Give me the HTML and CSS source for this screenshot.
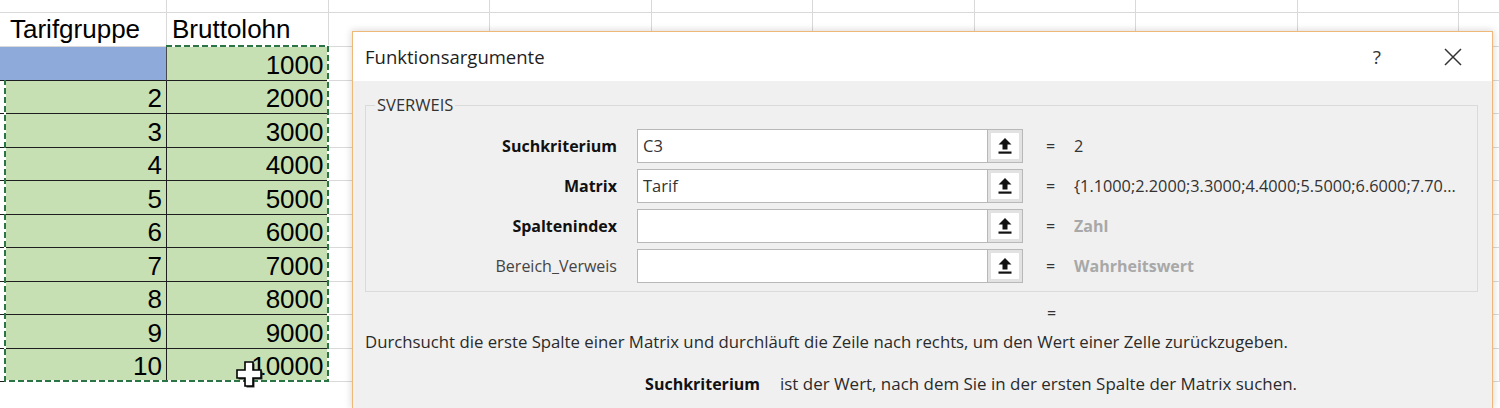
FILE: index.html
```html
<!DOCTYPE html>
<html lang="de">
<head>
<meta charset="utf-8">
<title>Funktionsargumente</title>
<link rel="stylesheet" href="styles.css">
</head>
<body>
<div class="sheet">
  <div class="c"></div><div class="c"></div><div class="c"></div><div class="c"></div><div class="c"></div><div class="c"></div><div class="c"></div><div class="c"></div><div class="c"></div><div class="c"></div>

  <div class="c h">Tarifgruppe</div><div class="c h hb">Bruttolohn</div><div class="c"></div><div class="c"></div><div class="c"></div><div class="c"></div><div class="c"></div><div class="c"></div><div class="c"></div><div class="c"></div>

  <div class="c blue"></div><div class="c g n">1000</div><div class="c"></div><div class="c"></div><div class="c"></div><div class="c"></div><div class="c"></div><div class="c"></div><div class="c"></div><div class="c"></div>
  <div class="c g a n">2</div><div class="c g n">2000</div><div class="c"></div><div class="c"></div><div class="c"></div><div class="c"></div><div class="c"></div><div class="c"></div><div class="c"></div><div class="c"></div>
  <div class="c g a n">3</div><div class="c g n">3000</div><div class="c"></div><div class="c"></div><div class="c"></div><div class="c"></div><div class="c"></div><div class="c"></div><div class="c"></div><div class="c"></div>
  <div class="c g a n">4</div><div class="c g n">4000</div><div class="c"></div><div class="c"></div><div class="c"></div><div class="c"></div><div class="c"></div><div class="c"></div><div class="c"></div><div class="c"></div>
  <div class="c g a n">5</div><div class="c g n">5000</div><div class="c"></div><div class="c"></div><div class="c"></div><div class="c"></div><div class="c"></div><div class="c"></div><div class="c"></div><div class="c"></div>
  <div class="c g a n">6</div><div class="c g n">6000</div><div class="c"></div><div class="c"></div><div class="c"></div><div class="c"></div><div class="c"></div><div class="c"></div><div class="c"></div><div class="c"></div>
  <div class="c g a n">7</div><div class="c g n">7000</div><div class="c"></div><div class="c"></div><div class="c"></div><div class="c"></div><div class="c"></div><div class="c"></div><div class="c"></div><div class="c"></div>
  <div class="c g a n">8</div><div class="c g n">8000</div><div class="c"></div><div class="c"></div><div class="c"></div><div class="c"></div><div class="c"></div><div class="c"></div><div class="c"></div><div class="c"></div>
  <div class="c g a n">9</div><div class="c g n">9000</div><div class="c"></div><div class="c"></div><div class="c"></div><div class="c"></div><div class="c"></div><div class="c"></div><div class="c"></div><div class="c"></div>
  <div class="c g a n">10</div><div class="c g n">10000</div><div class="c"></div><div class="c"></div><div class="c"></div><div class="c"></div><div class="c"></div><div class="c"></div><div class="c"></div><div class="c"></div>
</div>

<svg class="ants" width="1500" height="408" viewBox="0 0 1500 408">
  <path d="M166 46 H328 V381 H5 V80" fill="none" stroke="#ffffff" stroke-width="2"/>
  <path d="M166 46 H328 V381 H5 V80" fill="none" stroke="#2a7446" stroke-width="2" stroke-dasharray="6 3"/>
</svg>

<svg class="cursor" width="28" height="28" viewBox="0 0 28 28">
  <path d="M10 2 H18 V10 H26 V18 H18 V26 H10 V18 H2 V10 H10 Z" fill="#3a3a3a" transform="translate(1.5 1.5)"/>
  <path d="M10 2 H18 V10 H26 V18 H18 V26 H10 V18 H2 V10 H10 Z" fill="#ffffff" stroke="#000" stroke-width="1.6"/>
</svg>

<div class="dlg">
  <div class="title">
    <span class="t">Funktionsargumente</span>
    <span class="q">?</span>
    <svg class="x" width="18" height="18" viewBox="0 0 18 18">
      <path d="M1 1 L17 17 M17 1 L1 17" stroke="#333" stroke-width="1.5" fill="none"/>
    </svg>
  </div>
  <div class="body">
    <fieldset>
      <legend>SVERWEIS</legend>
      <div class="args">
        <div class="lbl b">Suchkriterium</div>
        <div class="inp"><span>C3</span><div class="btn"><svg width="16" height="18" viewBox="0 0 16 18"><path d="M8 1 L14.5 7.5 H10.5 V12.5 H5.5 V7.5 H1.5 Z" fill="#111"/><rect x="1.5" y="14.5" width="13" height="2.2" fill="#111"/></svg></div></div>
        <div class="eq">=</div>
        <div class="val">2</div>

        <div class="lbl b">Matrix</div>
        <div class="inp"><span>Tarif</span><div class="btn"><svg width="16" height="18" viewBox="0 0 16 18"><path d="M8 1 L14.5 7.5 H10.5 V12.5 H5.5 V7.5 H1.5 Z" fill="#111"/><rect x="1.5" y="14.5" width="13" height="2.2" fill="#111"/></svg></div></div>
        <div class="eq">=</div>
        <div class="val">{1.1000;2.2000;3.3000;4.4000;5.5000;6.6000;7.70...</div>

        <div class="lbl b">Spaltenindex</div>
        <div class="inp"><span></span><div class="btn"><svg width="16" height="18" viewBox="0 0 16 18"><path d="M8 1 L14.5 7.5 H10.5 V12.5 H5.5 V7.5 H1.5 Z" fill="#111"/><rect x="1.5" y="14.5" width="13" height="2.2" fill="#111"/></svg></div></div>
        <div class="eq">=</div>
        <div class="val muted">Zahl</div>

        <div class="lbl">Bereich_Verweis</div>
        <div class="inp"><span></span><div class="btn"><svg width="16" height="18" viewBox="0 0 16 18"><path d="M8 1 L14.5 7.5 H10.5 V12.5 H5.5 V7.5 H1.5 Z" fill="#111"/><rect x="1.5" y="14.5" width="13" height="2.2" fill="#111"/></svg></div></div>
        <div class="eq">=</div>
        <div class="val muted">Wahrheitswert</div>
      </div>
    </fieldset>
    <div class="result">=</div>
    <div class="desc">Durchsucht die erste Spalte einer Matrix und durchläuft die Zeile nach rechts, um den Wert einer Zelle zurückzugeben.</div>
    <div class="arghelp"><span class="an">Suchkriterium</span><span class="ad">ist der Wert, nach dem Sie in der ersten Spalte der Matrix suchen.</span></div>
  </div>
</div>
</body>
</html>
```

FILE: styles.css
```css
* { box-sizing: border-box; }
html, body { margin: 0; padding: 0; }
body {
  width: 1500px;
  height: 408px;
  overflow: hidden;
  background: #ffffff;
  position: relative;
  font-family: "Liberation Sans", Arial, sans-serif;
}

/* spreadsheet */
.sheet {
  display: grid;
  width: 1500px;
  height: 408px;
  overflow: hidden;
  grid-template-columns: 167px repeat(8, 161.5px) 41px;
  grid-template-rows: 13px 34px repeat(10, 33.5px) 26px;
}
.c {
  border-right: 1px solid #d9d9d9;
  border-bottom: 1px solid #d9d9d9;
  font-size: 26px;
  line-height: 26px;
  display: flex;
  align-items: flex-end;
  padding-bottom: 2px;
  color: #000;
  white-space: nowrap;
  overflow: hidden;
}
.h { padding-left: 10px; padding-bottom: 4px; }
.h.hb { padding-left: 5px; }
.n { justify-content: flex-end; padding-right: 4px; }
.g { background: #c6e0b4; border-bottom-color: #1e1e1e; }
.g.a {
  border-right-color: #1e1e1e;
  background: linear-gradient(90deg, #ffffff 5px, #c6e0b4 5px);
}
.blue { background: #8eaadb; border-bottom-color: #1e1e1e; border-right-color: #4a4a4a; }

.ants {
  position: absolute;
  left: 0;
  top: 0;
  pointer-events: none;
  z-index: 1;
}
.cursor {
  position: absolute;
  left: 235px;
  top: 360px;
  z-index: 2;
}

/* dialog */
.dlg {
  position: absolute;
  left: 352px;
  top: 31px;
  width: 1141px;
  height: 377px;
  border: 1px solid #f0b878;
  border-bottom: none;
  background: #f0f0f0;
  box-shadow: 0 0 7px 1px rgba(0, 0, 0, 0.14);
  font-family: "Open Sans", "Noto Sans", sans-serif;
  color: #222;
  z-index: 3;
}
.title {
  height: 49px;
  background: #ffffff;
  display: flex;
  align-items: center;
  padding-left: 12px;
  padding-right: 30px;
  font-size: 18.5px;
  color: #1e1e1e;
}
.title .t { flex: 1; }
.title .q { font-size: 19px; color: #333; margin-right: 63px; }
.title .x { display: block; }

.body {
  padding: 13px 14px 0 12px;
  font-size: 16px;
  line-height: 22px;
}
fieldset {
  margin: 0;
  border: 1px solid #dadada;
  padding: 13px 14px 8px 0;
}
legend {
  padding: 0 2px;
  margin-left: 9px;
  line-height: 22px;
  color: #333;
  font-size: 16.5px;
}
.args {
  display: grid;
  grid-template-columns: 271px 386px 51px 1fr;
  row-gap: 6px;
  align-items: center;
}
.lbl {
  text-align: right;
  padding-right: 20px;
  color: #444;
}
.lbl.b { font-weight: 700; color: #111; }
.inp {
  height: 34px;
  border: 1px solid #b8b8b8;
  background: #ffffff;
  display: flex;
}
.inp span {
  flex: 1;
  padding-left: 5px;
  line-height: 32px;
  color: #333;
  font-size: 16.5px;
}
.btn {
  width: 35px;
  border-left: 1px solid #b8b8b8;
  background: #ffffff;
  box-shadow: inset 0 0 0 3px #e2e2e2;
  display: flex;
  align-items: center;
  justify-content: center;
}
.btn svg { display: block; }
.eq { padding-left: 23px; color: #333; }
.val { color: #333; white-space: nowrap; font-size: 16.3px; }
.val.muted { color: #a8a8a8; font-weight: 700; font-size: 16px; }

.result {
  margin-top: 10px;
  padding-left: 682px;
  color: #333;
}
.desc {
  margin-top: 7px;
  color: #2a2a2a;
  white-space: nowrap;
  font-size: 16.75px;
}
.arghelp {
  margin-top: 20px;
  display: flex;
  white-space: nowrap;
  align-items: baseline;
}
.an {
  width: 395px;
  text-align: right;
  font-weight: 700;
  color: #111;
}
.ad {
  margin-left: 20px;
  color: #2a2a2a;
  font-size: 16.95px;
}
```
